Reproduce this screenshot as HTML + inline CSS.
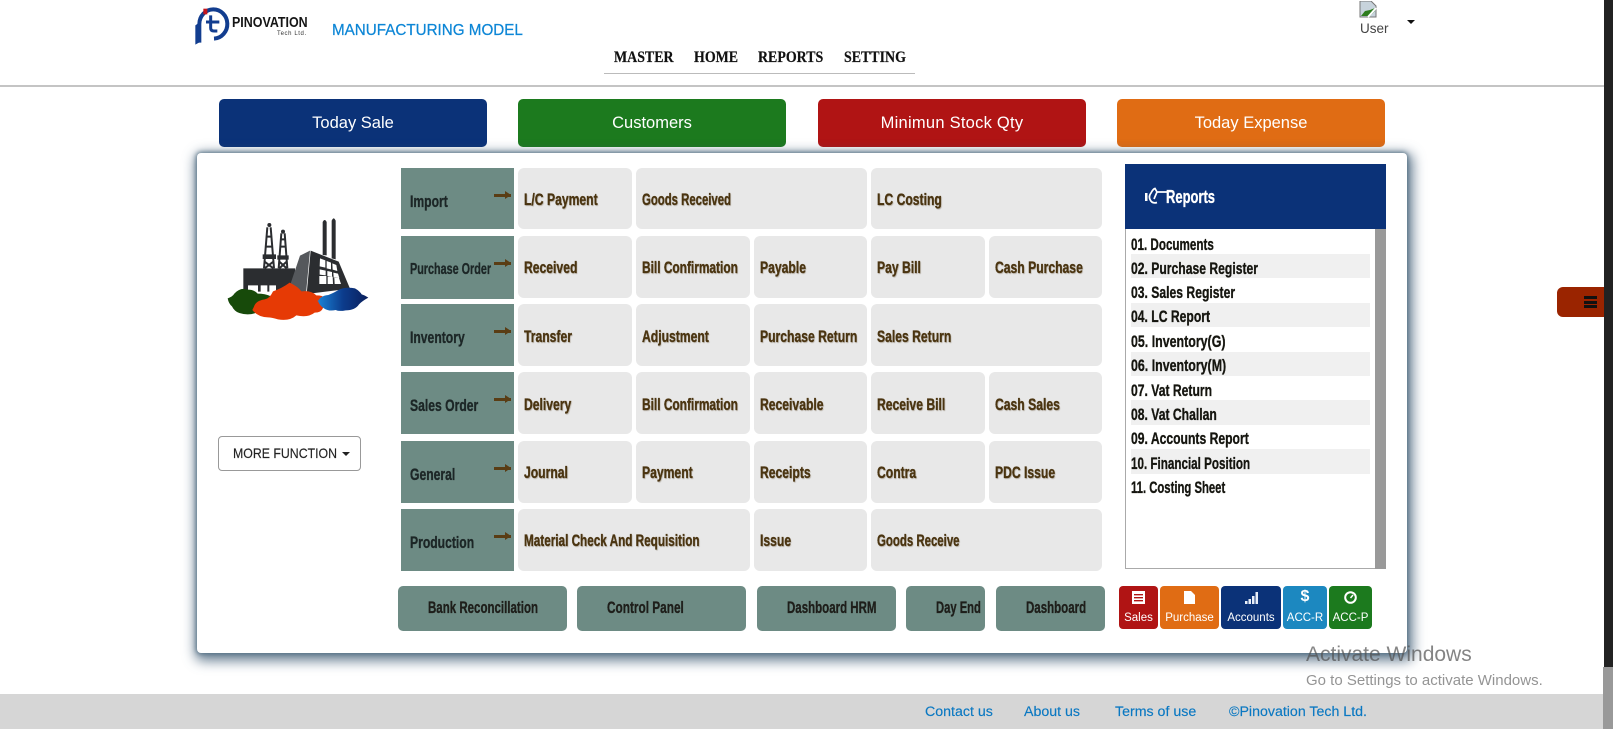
<!DOCTYPE html>
<html><head><meta charset="utf-8"><style>
html,body{margin:0;padding:0;background:#fff;width:1613px;height:729px;overflow:hidden}
body{position:relative;font-family:"Liberation Sans",sans-serif}
.a{position:absolute}
.card{position:absolute;top:99px;height:48px;width:268px;border-radius:5px;color:#fff;font-size:16.5px;line-height:48px;text-align:center}
.c{position:absolute;background:#e8e8e8;border-radius:6px}
.l{position:absolute;left:401px;width:113px;background:#6d8b84}
.t{position:absolute;white-space:nowrap;font-weight:700;font-size:17px;line-height:20px;color:#4a3410;transform:scaleX(.715);transform-origin:0 50%;text-shadow:1px 1px 1px rgba(90,70,40,.35);-webkit-text-stroke:.35px currentColor}
.ld{color:#1c2626;text-shadow:none}
.b{position:absolute;top:586px;height:45px;background:#6d8b84;border-radius:5px}
.b .t{color:#1e1e1a;top:11.5px;text-shadow:none;transform:scaleX(.677)}
.s{position:absolute;top:586px;height:43px;border-radius:4px;color:#fff;font-size:11.5px;text-align:center;line-height:16px}
.s span{position:absolute;left:0;right:0;top:24px;white-space:nowrap}
.r{position:absolute;left:1131px;width:239px;height:24.4px}
.r .t{color:#15150f;left:0;top:4.5px;text-shadow:none}
.arrow{position:absolute;left:494px;width:17px;height:2.5px;background:#5a3d14}
.arrow:after{content:"";position:absolute;right:0;top:-3px;border-left:6px solid #5a3d14;border-top:4px solid transparent;border-bottom:4px solid transparent}
.foot{position:absolute;top:701.500px;font-size:14.2px;line-height:20px;color:#0a78c2;-webkit-text-stroke:.15px #0a78c2;white-space:nowrap}
.nav{position:absolute;top:48px;font:700 16px/20px "Liberation Serif",serif;color:#111;transform:scaleX(.87);transform-origin:0 50%;-webkit-text-stroke:.2px #111}
</style></head><body>

<!-- header -->
<svg class="a" style="left:190px;top:0" width="130" height="52" viewBox="0 0 390 156">
<path d="M28 128V72A42 44 0 1 1 72 116" fill="none" stroke="#123d8f" stroke-width="12"/>
<path d="M16 134l14-8V66l-14 10z" fill="#123d8f"/>
<rect x="40" y="26" width="12" height="17" fill="#c4161c"/>
<path d="M62 46V84q0 9 10 9h10M48 66h40" fill="none" stroke="#123d8f" stroke-width="9"/>
</svg>
<div class="a" style="left:232px;top:14px;font-size:15px;line-height:18px;font-weight:700;color:#151515;transform:scaleX(.83);transform-origin:0 0;white-space:nowrap">PINOVATION</div>
<div class="a" style="left:277px;top:30px;font-size:6px;line-height:8px;color:#333;letter-spacing:.6px;white-space:nowrap">Tech Ltd.</div>
<div class="a" style="left:332px;top:21px;font-size:16px;line-height:20px;color:#0d86d6;transform:scaleX(.95);transform-origin:0 0;white-space:nowrap;-webkit-text-stroke:.25px #0d86d6">MANUFACTURING MODEL</div>
<div class="nav" style="left:614px">MASTER</div>
<div class="nav" style="left:694px">HOME</div>
<div class="nav" style="left:758px">REPORTS</div>
<div class="nav" style="left:844px">SETTING</div>
<div class="a" style="left:604px;top:73px;width:311px;height:1px;background:#bbb"></div>
<svg class="a" style="left:1359px;top:1px" width="18" height="17" viewBox="0 0 18 17">
<path d="M1 0h11l5 5v11H1z" fill="#c7d3dc" stroke="#777" stroke-width="1"/>
<path d="M2 15l4-5 5-1 5-2v3l-5 5z" fill="#2e7d1e"/><path d="M9 16L17 7" stroke="#fff" stroke-width="2"/>
</svg>
<div class="a" style="left:1360px;top:20px;font-size:13.5px;line-height:18px;color:#444">User</div>
<div class="a" style="left:1407px;top:20px;border-top:4px solid #111;border-left:4px solid transparent;border-right:4px solid transparent"></div>
<div class="a" style="left:0;top:85px;width:1604px;height:2px;background:#c4c4c4"></div>

<!-- top cards -->
<div class="card" style="left:219px;background:#0b3278">Today Sale</div>
<div class="card" style="left:518px;background:#1c7a1e">Customers</div>
<div class="card" style="left:818px;background:#b01414;letter-spacing:.25px">Minimun Stock Qty</div>
<div class="card" style="left:1117px;background:#e06c14">Today Expense</div>

<!-- panel -->
<div class="a" style="left:197px;top:153px;width:1210px;height:500px;background:#fff;border-radius:4px;box-shadow:0 0 4px 1px rgba(77,106,126,.8),2px 4px 12px 4px rgba(60,90,115,.75)"></div>

<!-- factory -->
<svg class="a" style="left:190px;top:190px" width="200" height="150" viewBox="0 0 600 450">
<defs><linearGradient id="g" x1="0" x2="1"><stop offset="0" stop-color="#1a84d8"/><stop offset=".5" stop-color="#0c3c8c"/><stop offset="1" stop-color="#0a1f5c"/></linearGradient></defs>
<path d="M160 235H315V305H160z" fill="#2b2d30"/>
<path d="M174 286h30v24h-30zM212 286h20v24h-20zM238 286h20v24h-20z" fill="#fff"/>
<g fill="none" stroke="#2b2d30" stroke-width="6">
<path d="M222 235L232 112M252 235L242 112M224 215L250 235M250 215L224 235M228 170H246M230 140H244"/>
<path d="M266 235L274 130M292 235L284 130M268 215L290 235M290 215L268 235M271 170H287M274 148H284"/>
</g>
<path d="M218 193h40v14h-40zM262 196h34v13h-34z" fill="#2b2d30"/>
<circle cx="238" cy="105" r="6" fill="#2b2d30"/><circle cx="279" cy="125" r="6" fill="#2b2d30"/>
<path d="M398 195V96q6-12 12 0V196zM425 205V92q6-14 12 0V208z" fill="#2b2d30"/>
<path d="M298 292L330 197 360 182 348 310z" fill="#55585c"/>
<path d="M362 182L446 215 480 296 350 312z" fill="#2b2d30"/>
<path d="M390 205l16 6v22l-17-4zM410 213l13 5v20l-13-3zM427 220l12 5 3 18-14-4zM389 238l18 4v14l-18-2zM412 243l14 3v14l-14-2zM430 248l14 3 4 13-17-1zM388 258h21v24h-21zM413 260h15l1 22h-16zM433 264h14l6 18h-19z" fill="#fff"/>
<path d="M113 325q15-5 20-14 18-20 40-12 20 0 30 12 22 0 40 8l-20 35q-35 28-75 15-15-5-22-20-10-8-13-24z" fill="#174a0a"/>
<path d="M192 350q5-18 32-22 15-2 25-24 25-8 50-26 25 12 35 26 30-4 45 12 20 0 25 8l-5 30q-5 14-25 14-20 16-55 8-20 18-55 12-20-6-30-6-30 0-47-22z" fill="#e63a05"/>
<path d="M383 335q8-18 32-20 20-8 30-15 20-10 50-5 14 8 20 18 8 2 20 10-18 10-28 20-12 18-40 18-20 4-30-1-20 5-35-5-14-8-19-25z" fill="url(#g)"/>
</svg>

<div class="a" style="left:218px;top:436px;width:141px;height:33px;border:1px solid #999;border-radius:4px;color:#222">
<div class="a" style="left:14px;top:0;font-size:14px;line-height:33px;transform:scaleX(.88);transform-origin:0 50%;white-space:nowrap;-webkit-text-stroke:.15px #222">MORE FUNCTION</div>
<div class="a" style="left:123px;top:15px;border-top:4px solid #222;border-left:4.500px solid transparent;border-right:4.500px solid transparent"></div></div>

<!-- grid -->
<div class="l" style="top:168px;height:61px"><div class="t ld" style="left:9px;top:23.500px">Import</div></div>
<div class="arrow" style="top:194px"></div>
<div class="c" style="left:518px;top:168px;width:114px;height:61px"><div class="t" style="left:6px;top:22px">L/C Payment</div></div>
<div class="c" style="left:636px;top:168px;width:231px;height:61px"><div class="t" style="left:6px;top:22px;transform:scaleX(.668)">Goods Received</div></div>
<div class="c" style="left:871px;top:168px;width:231px;height:61px"><div class="t" style="left:6px;top:22px">LC Costing</div></div>

<div class="l" style="top:236px;height:63px"><div class="t ld" style="left:9px;top:24px;font-size:16px;transform:scaleX(.675)">Purchase Order</div></div>
<div class="arrow" style="top:262px"></div>
<div class="c" style="left:518px;top:236px;width:114px;height:62px"><div class="t" style="left:6px;top:22px">Received</div></div>
<div class="c" style="left:636px;top:236px;width:114px;height:62px"><div class="t" style="left:6px;top:22px;transform:scaleX(.7)">Bill Confirmation</div></div>
<div class="c" style="left:754px;top:236px;width:113px;height:62px"><div class="t" style="left:6px;top:22px">Payable</div></div>
<div class="c" style="left:871px;top:236px;width:114px;height:62px"><div class="t" style="left:6px;top:22px">Pay Bill</div></div>
<div class="c" style="left:989px;top:236px;width:113px;height:62px"><div class="t" style="left:6px;top:22px">Cash Purchase</div></div>

<div class="l" style="top:304px;height:62px"><div class="t ld" style="left:9px;top:23.500px">Inventory</div></div>
<div class="arrow" style="top:330px"></div>
<div class="c" style="left:518px;top:304px;width:114px;height:62px"><div class="t" style="left:6px;top:22.500px">Transfer</div></div>
<div class="c" style="left:636px;top:304px;width:114px;height:62px"><div class="t" style="left:6px;top:22.500px">Adjustment</div></div>
<div class="c" style="left:754px;top:304px;width:113px;height:62px"><div class="t" style="left:6px;top:22.500px">Purchase Return</div></div>
<div class="c" style="left:871px;top:304px;width:231px;height:62px"><div class="t" style="left:6px;top:22.500px">Sales Return</div></div>

<div class="l" style="top:372px;height:62px"><div class="t ld" style="left:9px;top:24px">Sales Order</div></div>
<div class="arrow" style="top:398px"></div>
<div class="c" style="left:518px;top:372px;width:114px;height:62px"><div class="t" style="left:6px;top:22.500px">Delivery</div></div>
<div class="c" style="left:636px;top:372px;width:114px;height:62px"><div class="t" style="left:6px;top:22.500px;transform:scaleX(.7)">Bill Confirmation</div></div>
<div class="c" style="left:754px;top:372px;width:113px;height:62px"><div class="t" style="left:6px;top:22.500px">Receivable</div></div>
<div class="c" style="left:871px;top:372px;width:114px;height:62px"><div class="t" style="left:6px;top:22.500px">Receive Bill</div></div>
<div class="c" style="left:989px;top:372px;width:113px;height:62px"><div class="t" style="left:6px;top:22.500px">Cash Sales</div></div>

<div class="l" style="top:441px;height:62px"><div class="t ld" style="left:9px;top:23.500px">General</div></div>
<div class="arrow" style="top:467px"></div>
<div class="c" style="left:518px;top:441px;width:114px;height:62px"><div class="t" style="left:6px;top:22px">Journal</div></div>
<div class="c" style="left:636px;top:441px;width:114px;height:62px"><div class="t" style="left:6px;top:22px">Payment</div></div>
<div class="c" style="left:754px;top:441px;width:113px;height:62px"><div class="t" style="left:6px;top:22px">Receipts</div></div>
<div class="c" style="left:871px;top:441px;width:114px;height:62px"><div class="t" style="left:6px;top:22px">Contra</div></div>
<div class="c" style="left:989px;top:441px;width:113px;height:62px"><div class="t" style="left:6px;top:22px">PDC Issue</div></div>

<div class="l" style="top:509px;height:62px"><div class="t ld" style="left:9px;top:23.500px">Production</div></div>
<div class="arrow" style="top:535px"></div>
<div class="c" style="left:518px;top:509px;width:232px;height:62px"><div class="t" style="left:6px;top:22px;transform:scaleX(.69)">Material Check And Requisition</div></div>
<div class="c" style="left:754px;top:509px;width:113px;height:62px"><div class="t" style="left:6px;top:22px">Issue</div></div>
<div class="c" style="left:871px;top:509px;width:231px;height:62px"><div class="t" style="left:6px;top:22px;transform:scaleX(.672)">Goods Receive</div></div>

<!-- bottom buttons -->
<div class="b" style="left:398px;width:169px"><div class="t" style="left:30px">Bank Reconcillation</div></div>
<div class="b" style="left:577px;width:169px"><div class="t" style="left:30px;transform:scaleX(.695)">Control Panel</div></div>
<div class="b" style="left:757px;width:139px"><div class="t" style="left:30px">Dashboard HRM</div></div>
<div class="b" style="left:906px;width:79px"><div class="t" style="left:30px;transform:scaleX(.66)">Day End</div></div>
<div class="b" style="left:996px;width:109px"><div class="t" style="left:30px">Dashboard</div></div>

<div class="s" style="left:1119px;width:39px;background:#b01414"><svg class="a" style="left:13px;top:5px" width="13" height="13" viewBox="0 0 13 13"><path d="M0 0h13v13H0z" fill="#fff"/><path d="M2 3h9v1.400H2zM2 6h9v1.400H2zM2 9h9v1.400H2z" fill="#b01414"/></svg><span>Sales</span></div>
<div class="s" style="left:1160px;width:59px;background:#e06c14"><svg class="a" style="left:24px;top:5px" width="11" height="13" viewBox="0 0 11 13"><path d="M0 0h7l4 4v9H0z" fill="#fff"/></svg><span>Purchase</span></div>
<div class="s" style="left:1221px;width:60px;background:#0b3278"><svg class="a" style="left:24px;top:5px" width="13" height="13" viewBox="0 0 13 13"><path d="M0 10h2.500v3H0zM3.500 8H6v5H3.500zM7 5h2.500v8H7zM10.500 1H13v12h-2.500z" fill="#e8eef8"/></svg><span>Accounts</span></div>
<div class="s" style="left:1283px;width:44px;background:#1c88c0"><div class="a" style="left:0;right:0;top:3px;font-size:16px;font-weight:700;line-height:16px">$</div><span>ACC-R</span></div>
<div class="s" style="left:1329px;width:43px;background:#1c7a1e"><svg class="a" style="left:15px;top:5px" width="13" height="13" viewBox="0 0 13 13"><circle cx="6.500" cy="6.500" r="5.300" fill="none" stroke="#fff" stroke-width="2"/><path d="M6.500 7L9 4" stroke="#fff" stroke-width="1.500"/></svg><span>ACC-P</span></div>

<!-- reports -->
<div class="a" style="left:1125px;top:164px;width:261px;height:65px;background:#0b3278"></div>
<svg class="a" style="left:1144px;top:187px" width="27" height="18" viewBox="0 0 27 18"><path d="M1 6h2.500v8H1z" fill="#fff"/><path d="M24 5H13L11 1.500Q9 2 7 6 4.500 9 6 12.500 8 17 13 15.500M10 12L13 5" fill="none" stroke="#fff" stroke-width="1.700"/></svg>
<div class="t" style="left:1166px;top:187px;color:#fff;font-size:18px;text-shadow:none;transform:scaleX(.72)">Reports</div>
<div class="a" style="left:1125px;top:229px;width:259px;height:339px;border:1px solid #aaa;border-top:0"></div>
<div class="a" style="left:1375px;top:229px;width:11px;height:340px;background:#999"></div>
<div class="r" style="top:230px"><div class="t" style="transform:scaleX(.685)">01. Documents</div></div>
<div class="r" style="top:254px;background:#f0f0f0"><div class="t">02. Purchase Register</div></div>
<div class="r" style="top:278.400px"><div class="t">03. Sales Register</div></div>
<div class="r" style="top:302.800px;background:#f0f0f0"><div class="t">04. LC Report</div></div>
<div class="r" style="top:327.200px"><div class="t" style="transform:scaleX(.73)">05. Inventory(G)</div></div>
<div class="r" style="top:351.600px;background:#f0f0f0"><div class="t" style="transform:scaleX(.73)">06. Inventory(M)</div></div>
<div class="r" style="top:376px"><div class="t">07. Vat Return</div></div>
<div class="r" style="top:400.400px;background:#f0f0f0"><div class="t">08. Vat Challan</div></div>
<div class="r" style="top:424.800px"><div class="t">09. Accounts Report</div></div>
<div class="r" style="top:449.200px;background:#f0f0f0"><div class="t" style="transform:scaleX(.685)">10. Financial Position</div></div>
<div class="r" style="top:473.600px"><div class="t" style="transform:scaleX(.665)">11. Costing Sheet</div></div>

<!-- side tab -->
<div class="a" style="left:1557px;top:287px;width:47px;height:30px;background:#9a2400;border-radius:6px 0 0 6px"></div>
<div class="a" style="left:1584px;top:296px;width:13px;height:3px;background:#111;box-shadow:0 5px 0 #111,0 9px 0 #111"></div>

<!-- footer -->
<div class="a" style="left:0;top:694px;width:1603px;height:35px;background:#d6d6d6"></div>
<div class="foot" style="left:925px">Contact us</div>
<div class="foot" style="left:1024px">About us</div>
<div class="foot" style="left:1115px">Terms of use</div>
<div class="foot" style="left:1229px">©Pinovation Tech Ltd.</div>

<!-- scrollbar -->
<div class="a" style="left:1604px;top:0;width:9px;height:667px;background:#222"></div>
<div class="a" style="left:1603px;top:667px;width:10px;height:62px;background:#999"></div>

<!-- watermark -->
<div class="a" style="left:1306px;top:643px;font-size:21px;line-height:24px;color:rgba(80,80,80,.7);white-space:nowrap">Activate Windows</div>
<div class="a" style="left:1306px;top:672px;font-size:15px;line-height:18px;color:#949494;white-space:nowrap">Go to Settings to activate Windows.</div>
</body></html>
